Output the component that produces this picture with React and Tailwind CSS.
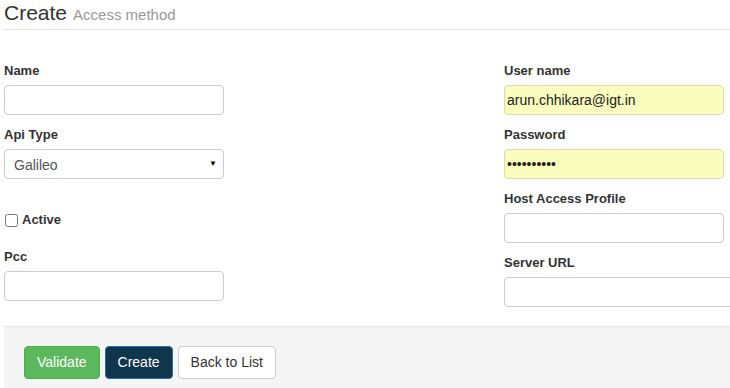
import React from "react";

const font = { fontFamily: '"Liberation Sans", Arial, sans-serif' };

function Field({ label, children, last = false }) {
    return (
        <div className={last ? "mb-0" : "mb-[11px]"}>
            <label className="block text-[13px] leading-[18px] font-bold text-[#333] mb-[5px]">{label}</label>
            {children}
        </div>
    );
}

function TextInput({ value = "", type = "text", filled = false, className = "w-[220px]" }) {
    return (
        <input
            type={type}
            defaultValue={value}
            className={
                "block h-[30px] rounded-[4px] border px-[2px] text-[14px] text-[#222] outline-none " +
                (filled ? "bg-[#fafdbe] border-[#dcdca8] " : "bg-white border-[#ccc] ") +
                className
            }
        />
    );
}

export default function App() {
    return (
        <div className="w-[730px] h-[388px] overflow-hidden bg-white text-[#333]" style={font}>
            <div className="pl-[4px]">
                <h3 className="h-[30px] pt-[2px] border-b border-[#e5e5e5] leading-[21px]">
                    <span className="text-[21px] text-[#333]">Create</span>
                    <span className="text-[15px] text-[#999] ml-[6px]">Access method</span>
                </h3>

                <div className="flex pt-[32px]">
                    {/* left column */}
                    <div className="w-[220px]">
                        <Field label="Name">
                            <TextInput />
                        </Field>
                        <Field label="Api Type">
                            <div className="relative w-[220px] h-[30px] rounded-[4px] border border-[#ccc] bg-white">
                                <span className="absolute left-[9px] top-[5px] text-[14px] text-[#555]">Galileo</span>
                                <span className="absolute right-[6px] top-[8px] text-[8px] text-black">▼</span>
                            </div>
                        </Field>
                        <div className="h-[20px] flex items-center mt-[31px] mb-[18px]">
                            <input type="checkbox" className="w-[13px] h-[13px] ml-[1px] mr-[4px] accent-[#ddd]" />
                            <span className="text-[13px] font-bold text-[#333]">Active</span>
                        </div>
                        <Field label="Pcc" last>
                            <TextInput />
                        </Field>
                    </div>

                    {/* right column */}
                    <div className="ml-[280px] w-[240px]">
                        <Field label="User name">
                            <TextInput value="arun.chhikara@igt.in" filled />
                        </Field>
                        <Field label="Password">
                            <TextInput value="pass123456" type="password" filled />
                        </Field>
                        <Field label="Host Access Profile">
                            <TextInput />
                        </Field>
                        <Field label="Server URL" last>
                            <TextInput className="w-[240px]" />
                        </Field>
                    </div>
                </div>

                <div className="mt-[19px] bg-[#f5f5f5] border-t border-[#e5e5e5] pt-[19px] pl-[20px] pb-[20px] flex gap-[5px]">
                    <button className="h-[33px] px-[12px] rounded-[4px] bg-[#5cb85c] border border-[#4cae4c] text-white text-[14px]">Validate</button>
                    <button className="h-[33px] px-[12px] rounded-[4px] bg-[#10364d] border border-[#2e6da4] text-white text-[14px]">Create</button>
                    <button className="h-[33px] px-[12px] rounded-[4px] bg-white border border-[#ccc] text-[#333] text-[14px]">Back to List</button>
                </div>
            </div>
        </div>
    );
}
